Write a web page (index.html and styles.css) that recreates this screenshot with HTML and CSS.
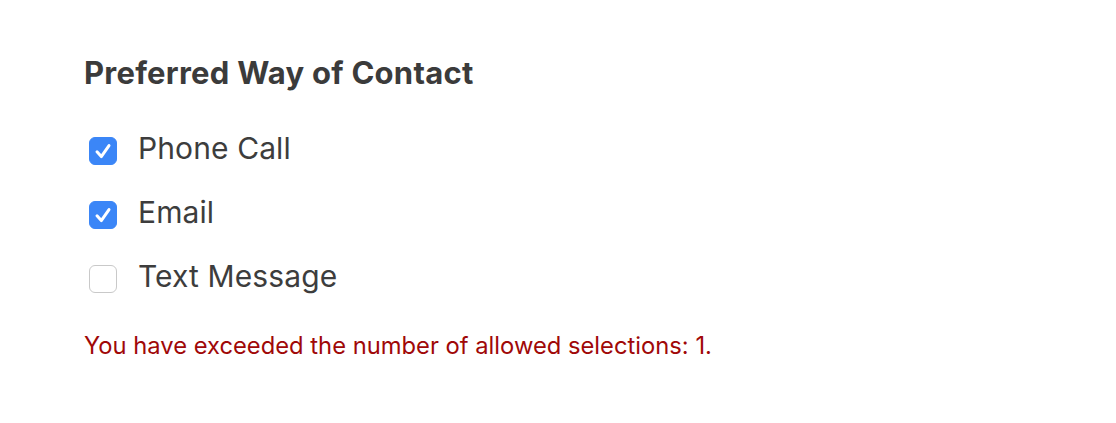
FILE: index.html
```html
<!DOCTYPE html>
<html>
<head>
<meta charset="utf-8">
<link rel="stylesheet" href="styles.css">
</head>
<body>
<div class="form">
  <h2 class="title">Preferred Way of Contact</h2>
  <div class="options">
    <label class="option"><span class="box checked"><svg viewBox="0 0 28 28" width="28" height="28"><path d="M8 14.8 L12.3 19.6 L20 8.6" fill="none" stroke="#fff" stroke-width="3" stroke-linecap="round" stroke-linejoin="round"/></svg></span><span class="label">Phone Call</span></label>
    <label class="option"><span class="box checked"><svg viewBox="0 0 28 28" width="28" height="28"><path d="M8 14.8 L12.3 19.6 L20 8.6" fill="none" stroke="#fff" stroke-width="3" stroke-linecap="round" stroke-linejoin="round"/></svg></span><span class="label">Email</span></label>
    <label class="option"><span class="box"></span><span class="label">Text Message</span></label>
  </div>
  <p class="error">You have exceeded the number of allowed selections: 1.</p>
</div>
</body>
</html>
```
FILE: styles.css
```css
html, body {
  margin: 0;
  background: #fff;
}
body {
  font-family: Inter, "Noto Sans", sans-serif;
  color: #3a3a3a;
}
.form {
  padding: 55px 0 0 84px;
}
.title {
  margin: 0;
  font-size: 31px;
  font-weight: 700;
  line-height: 36px;
  letter-spacing: 0.25px;
  color: #3b3b3b;
}
.options {
  display: flex;
  flex-direction: column;
  gap: 36px;
  margin-top: 46px;
  padding-left: 5px;
}
.option {
  display: flex;
  align-items: center;
  gap: 21px;
  height: 28px;
}
.box {
  flex: none;
  width: 28px;
  height: 28px;
  box-sizing: border-box;
  border-radius: 6px;
  border: 1.5px solid #c9c9c9;
  background: #fff;
  display: flex;
}
.box.checked {
  background: #3b86f7;
  border-color: #3b86f7;
}
.box svg {
  margin: -1.5px;
}
.label {
  font-size: 30px;
  letter-spacing: 0.1px;
  color: #3d3d3d;
  margin-bottom: 6px;
}
.error {
  margin: 38px 0 0;
  font-size: 23.75px;
  color: #a00808;
}
```
